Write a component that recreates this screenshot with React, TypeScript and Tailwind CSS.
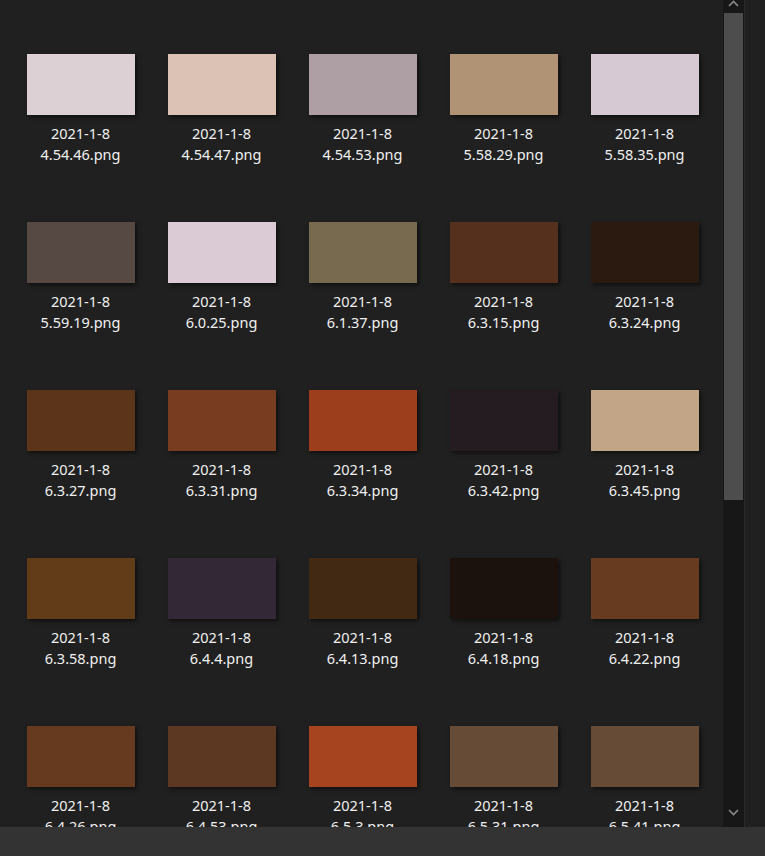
import React from "react";

const items: { c: string; n: string }[] = [
  { c: "#ddd0d5", n: "4.54.46.png" },
  { c: "#dcc2b5", n: "4.54.47.png" },
  { c: "#ae9fa5", n: "4.54.53.png" },
  { c: "#b09374", n: "5.58.29.png" },
  { c: "#d6c9d4", n: "5.58.35.png" },
  { c: "#564843", n: "5.59.19.png" },
  { c: "#dacbd5", n: "6.0.25.png" },
  { c: "#786a4e", n: "6.1.37.png" },
  { c: "#55311d", n: "6.3.15.png" },
  { c: "#2b1a10", n: "6.3.24.png" },
  { c: "#5b3419", n: "6.3.27.png" },
  { c: "#783d20", n: "6.3.31.png" },
  { c: "#9c3e1b", n: "6.3.34.png" },
  { c: "#251c22", n: "6.3.42.png" },
  { c: "#c2a587", n: "6.3.45.png" },
  { c: "#623b18", n: "6.3.58.png" },
  { c: "#332835", n: "6.4.4.png" },
  { c: "#412913", n: "6.4.13.png" },
  { c: "#1b120e", n: "6.4.18.png" },
  { c: "#673b20", n: "6.4.22.png" },
  { c: "#663a1f", n: "6.4.26.png" },
  { c: "#5c3822", n: "6.4.53.png" },
  { c: "#a6441f", n: "6.5.3.png" },
  { c: "#664b37", n: "6.5.31.png" },
  { c: "#664b37", n: "6.5.41.png" },
];

export default function App() {
  return (
    <div
      className="w-[765px] h-[856px] flex flex-col bg-[#202020] overflow-hidden"
      style={{ fontFamily: '"Noto Sans", "Open Sans", sans-serif' }}
    >
      <div className="flex flex-row h-[827px]">
        <div className="w-[723px] h-full overflow-hidden pl-[10px] pt-[54px]">
          <div className="grid grid-cols-[repeat(5,141px)] gap-y-[57px]">
            {items.map((it, i) => (
              <div key={i} className="flex flex-col items-center">
                <div
                  className="w-[108px] h-[61px] shadow-[2px_2px_4px_rgba(0,0,0,0.55)]"
                  style={{ backgroundColor: it.c }}
                />
                <div className="mt-[8px] text-[14.5px] leading-[21px] text-[#f0f0f0] text-center">
                  <div>2021-1-8</div>
                  <div>{it.n}</div>
                </div>
              </div>
            ))}
          </div>
        </div>
        <div className="w-[21px] h-full bg-[#171717] flex flex-col items-center">
          <div className="h-[13px] w-full flex justify-center items-start">
            <svg width="11" height="7" viewBox="0 0 11 7">
              <polyline points="1,6 5.5,1.5 10,6" fill="none" stroke="#8a8a8a" strokeWidth="1.6" />
            </svg>
          </div>
          <div className="w-[19px] h-[487px] bg-[#4d4d4d]" />
          <div className="flex-1" />
          <div className="h-[18px] w-full flex justify-center items-start">
            <svg width="11" height="7" viewBox="0 0 11 7">
              <polyline points="1,1 5.5,5.5 10,1" fill="none" stroke="#8a8a8a" strokeWidth="1.6" />
            </svg>
          </div>
        </div>
        <div className="w-[21px] h-full border-l border-[#2a2a2a] bg-[#202020]" />
      </div>
      <div className="h-[29px] bg-[#333333]" />
    </div>
  );
}
